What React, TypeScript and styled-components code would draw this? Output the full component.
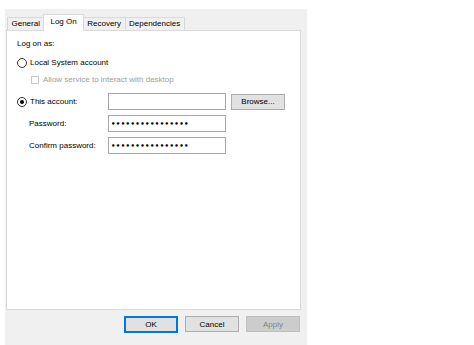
import React, { useState } from 'react';
import styled, { createGlobalStyle } from 'styled-components';

const GlobalStyle = createGlobalStyle`
  html, body {
    margin: 0;
    padding: 0;
    background: #fff;
  }
  body {
    font-family: "Liberation Sans", Arial, sans-serif;
    font-size: 8px;
    color: #000;
  }
`;

// Window chrome
const Page = styled.div`
  width: 474px;
  height: 345px;
  overflow: hidden;
  padding: 9px 0 0 5px;
  box-sizing: border-box;
`;

const Dialog = styled.div`
  width: 302px;
  height: 336px;
  background: #f0f0f0;
  padding-top: 5px;
  box-sizing: border-box;
  display: flex;
  flex-direction: column;
`;

const TabStrip = styled.div`
  display: flex;
  align-items: flex-end;
  height: 16px;
  padding-left: 2px;
  position: relative;
  z-index: 1;
`;

const Tab = styled.div<{ $active?: boolean }>`
  height: ${(p) => (p.$active ? '17px' : '13px')};
  padding: 0 ${(p) => (p.$active ? '6px' : '3.5px')};
  padding-bottom: ${(p) => (p.$active ? '2px' : '0')};
  margin-bottom: ${(p) => (p.$active ? '-1px' : '0')};
  margin-left: -1px;
  border: 1px solid #d9d9d9;
  border-bottom: none;
  background: ${(p) => (p.$active ? '#fff' : '#f0f0f0')};
  display: flex;
  align-items: center;
  box-sizing: border-box;
  line-height: 1;
  white-space: nowrap;
  &:first-child {
    margin-left: 0;
  }
`;

const Panel = styled.div`
  margin-left: 1px;
  width: 295px;
  height: 280px;
  background: #fff;
  border: 1px solid #d9d9d9;
  box-sizing: border-box;
  padding: 8px 0 0 10px;
  display: flex;
  flex-direction: column;
`;

const Text = styled.div<{ $muted?: boolean }>`
  line-height: 10px;
  white-space: nowrap;
  color: ${(p) => (p.$muted ? '#a0a0a0' : '#000')};
`;

const OptionRow = styled.label<{ $top: number; $indent?: number }>`
  display: flex;
  align-items: center;
  gap: 3px;
  margin-top: ${(p) => p.$top}px;
  margin-left: ${(p) => p.$indent || 0}px;
  height: 10px;
`;

const RadioCircle = styled.span<{ $checked?: boolean }>`
  width: 10px;
  height: 10px;
  border: 1px solid #333;
  border-radius: 50%;
  box-sizing: border-box;
  display: flex;
  align-items: center;
  justify-content: center;
  background: #fff;
  &::after {
    content: '';
    width: 4px;
    height: 4px;
    border-radius: 50%;
    background: ${(p) => (p.$checked ? '#000' : 'transparent')};
  }
`;

const CheckBox = styled.span`
  width: 8px;
  height: 8px;
  border: 1px solid #c8c8c8;
  box-sizing: border-box;
  background: #fff;
  margin-right: 1px;
`;

const FieldGrid = styled.div`
  display: grid;
  grid-template-columns: 86px 118px 56px;
  column-gap: 5px;
  row-gap: 5px;
  margin-top: 8px;
  align-items: center;
`;

const FieldLabel = styled.div<{ $indent?: number }>`
  display: flex;
  align-items: center;
  gap: 3px;
  padding-left: ${(p) => p.$indent || 0}px;
  white-space: nowrap;
`;

const TextBox = styled.div`
  height: 17px;
  border: 1px solid #a6a6a6;
  box-sizing: border-box;
  background: #fff;
  display: flex;
  align-items: center;
  padding-left: 2px;
  font-family: "DejaVu Sans", sans-serif;
  font-size: 7px;
  letter-spacing: 0.4px;
  font-weight: bold;
`;

const Button = styled.button<{ $primary?: boolean }>`
  font-family: "Liberation Sans", Arial, sans-serif;
  font-size: 8px;
  height: ${(p) => (p.$primary ? '17px' : '16px')};
  width: 54px;
  padding: 0;
  background: #e1e1e1;
  border: 1px solid ${(p) => (p.$primary ? '#0078d7' : '#adadad')};
  box-shadow: ${(p) => (p.$primary ? 'inset 0 0 0 1px #0078d7' : 'none')};
  color: #000;
  cursor: default;
  &:disabled {
    background: #cccccc;
    border-color: #bfbfbf;
    color: #838383;
  }
`;

const Footer = styled.div`
  display: flex;
  justify-content: flex-end;
  gap: 7px;
  padding: 6px 7px 0 0;
`;

const App = () => {
  const [account, setAccount] = useState<'local' | 'this'>('this');
  const dots = '\u2022'.repeat(16);

  return (
    <>
      <GlobalStyle />
      <Page>
        <Dialog>
          <TabStrip>
            <Tab>General</Tab>
            <Tab $active>Log On</Tab>
            <Tab>Recovery</Tab>
            <Tab>Dependencies</Tab>
          </TabStrip>
          <Panel>
            <Text>Log on as:</Text>
            <OptionRow $top={9} onClick={() => setAccount('local')}>
              <RadioCircle $checked={account === 'local'} />
              <Text>Local System account</Text>
            </OptionRow>
            <OptionRow $top={7} $indent={14}>
              <CheckBox />
              <Text $muted>Allow service to interact with desktop</Text>
            </OptionRow>
            <FieldGrid>
              <FieldLabel onClick={() => setAccount('this')}>
                <RadioCircle $checked={account === 'this'} />
                <Text>This account:</Text>
              </FieldLabel>
              <TextBox />
              <Button>Browse...</Button>
              <FieldLabel $indent={12}>
                <Text>Password:</Text>
              </FieldLabel>
              <TextBox>{dots}</TextBox>
              <span />
              <FieldLabel $indent={12}>
                <Text>Confirm password:</Text>
              </FieldLabel>
              <TextBox>{dots}</TextBox>
              <span />
            </FieldGrid>
          </Panel>
          <Footer>
            <Button $primary>OK</Button>
            <Button>Cancel</Button>
            <Button disabled>Apply</Button>
          </Footer>
        </Dialog>
      </Page>
    </>
  );
};

export default App;
